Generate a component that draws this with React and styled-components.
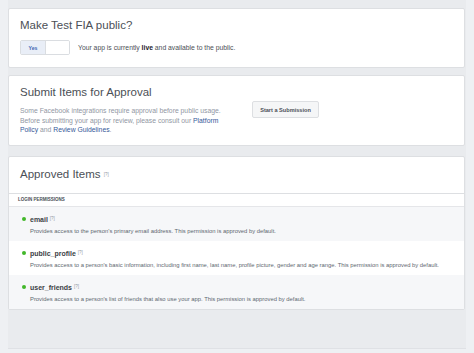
import React from 'react';
import styled, { createGlobalStyle } from 'styled-components';

const GlobalStyle = createGlobalStyle`
  html, body {
    margin: 0;
    padding: 0;
    background: #eef0f3;
  }
  body {
    font-family: "Liberation Sans", Arial, Helvetica, sans-serif;
    color: #4b4f56;
  }
`;

const permissions = [
  {
    name: 'email',
    text: "Provides access to the person's primary email address. This permission is approved by default.",
  },
  {
    name: 'public_profile',
    text: "Provides access to a person's basic information, including first name, last name, profile picture, gender and age range. This permission is approved by default.",
  },
  {
    name: 'user_friends',
    text: "Provides access to a person's list of friends that also use your app. This permission is approved by default.",
  },
];

function App() {
  return (
    <>
      <GlobalStyle />
      <Main>
        <Card $pad="9px 11px 12px">
          <Title>Make Test FIA public?</Title>
          <ToggleRow>
            <Toggle>
              <ToggleOn>Yes</ToggleOn>
              <ToggleOff />
            </Toggle>
            <Note>
              Your app is currently <b>live</b> and available to the public.
            </Note>
          </ToggleRow>
        </Card>

        <Card $pad="9px 11px 10px" $gap="10px">
          <SubmitRow>
            <SubmitText>
              <Title>Submit Items for Approval</Title>
              <Para>
                Some Facebook integrations require approval before public usage.
                Before submitting your app for review, please consult our{' '}
                <Link href="#">Platform Policy</Link> and <Link href="#">Review Guidelines</Link>.
              </Para>
            </SubmitText>
            <Button type="button">Start a Submission</Button>
          </SubmitRow>
        </Card>

        <Card>
          <ApprovedHead>
            <Title>
              Approved Items <Help>[?]</Help>
            </Title>
          </ApprovedHead>
          <SectionLabel>Login Permissions</SectionLabel>
          {permissions.map((p, i) => (
            <PermRow key={p.name} $alt={i % 2 === 0}>
              <PermName>
                <Dot />
                {p.name} <Help>[?]</Help>
              </PermName>
              <PermText>{p.text}</PermText>
            </PermRow>
          ))}
        </Card>
      </Main>
    </>
  );
}

const Main = styled.div`
  margin-left: 8px;
  width: 458px;
  height: 349px;
  box-sizing: border-box;
  padding-top: 8px;
  background: #e9ebee;
  border-bottom: 1px solid #dfe1e5;
`;

const Card = styled.div`
  background: #fff;
  border: 1px solid #dddfe2;
  border-radius: 2px;
  padding: ${(p) => p.$pad || '0'};
  margin-bottom: ${(p) => p.$gap || '7px'};
  width: 457px;
  box-sizing: border-box;
`;

const Title = styled.h2`
  margin: 0;
  font-size: 11.5px;
  line-height: 14px;
  font-weight: normal;
  color: #4b4f56;
`;

const Help = styled.span`
  font-size: 4.5px;
  font-weight: normal;
  color: #9197a3;
  vertical-align: 2px;
`;

const ToggleRow = styled.div`
  display: flex;
  align-items: center;
  gap: 8px;
  margin-top: 8px;
`;

const Toggle = styled.div`
  display: flex;
  width: 50px;
  height: 15px;
  box-sizing: border-box;
  border: 1px solid #dadde1;
  border-radius: 2px;
  overflow: hidden;
`;

const ToggleOn = styled.span`
  flex: 0 0 24px;
  display: flex;
  align-items: center;
  justify-content: center;
  background: #e9eef7;
  color: #4267b2;
  font-size: 5.2px;
  font-weight: bold;
  border-right: 1px solid #dadde1;
`;

const ToggleOff = styled.span`
  flex: 1;
  background: #fff;
`;

const Note = styled.span`
  font-size: 6.8px;
  color: #4b4f56;
  b {
    color: #1d2129;
  }
`;

const SubmitRow = styled.div`
  display: flex;
  align-items: center;
  gap: 18px;
`;

const SubmitText = styled.div`
  width: 214px;
`;

const Para = styled.p`
  margin: 7px 0 0;
  font-size: 6.8px;
  line-height: 9.5px;
  color: #9197a3;
`;

const Link = styled.a`
  color: #365899;
  text-decoration: none;
`;

const Button = styled.button`
  width: 67px;
  height: 17px;
  padding: 0;
  border: 1px solid #dddfe2;
  border-radius: 2px;
  background: #f5f6f7;
  font-family: inherit;
  font-size: 5.6px;
  font-weight: bold;
  color: #4b4f56;
`;

const ApprovedHead = styled.div`
  padding: 10px 11px 11px;
`;

const SectionLabel = styled.div`
  height: 14px;
  box-sizing: border-box;
  display: flex;
  align-items: center;
  padding-left: 9px;
  border-top: 1px solid #dddfe2;
  border-bottom: 1px solid #e5e6e9;
  font-size: 4.5px;
  font-weight: bold;
  text-transform: uppercase;
  color: #4b4f56;
`;

const PermRow = styled.div`
  height: 34px;
  box-sizing: border-box;
  padding: 7px 12px 0 13px;
  background: ${(p) => (p.$alt ? '#f6f7f9' : '#fff')};
`;

const PermName = styled.div`
  position: relative;
  padding-left: 8px;
  font-size: 7px;
  line-height: 10px;
  font-weight: bold;
  color: #3b3f45;
`;

const Dot = styled.span`
  position: absolute;
  left: 0;
  top: 3px;
  width: 4px;
  height: 4px;
  border-radius: 50%;
  background: #42b72a;
`;

const PermText = styled.div`
  margin-top: 1px;
  padding-left: 8px;
  font-size: 5.85px;
  line-height: 10px;
  color: #606770;
  white-space: nowrap;
`;

export default App;
